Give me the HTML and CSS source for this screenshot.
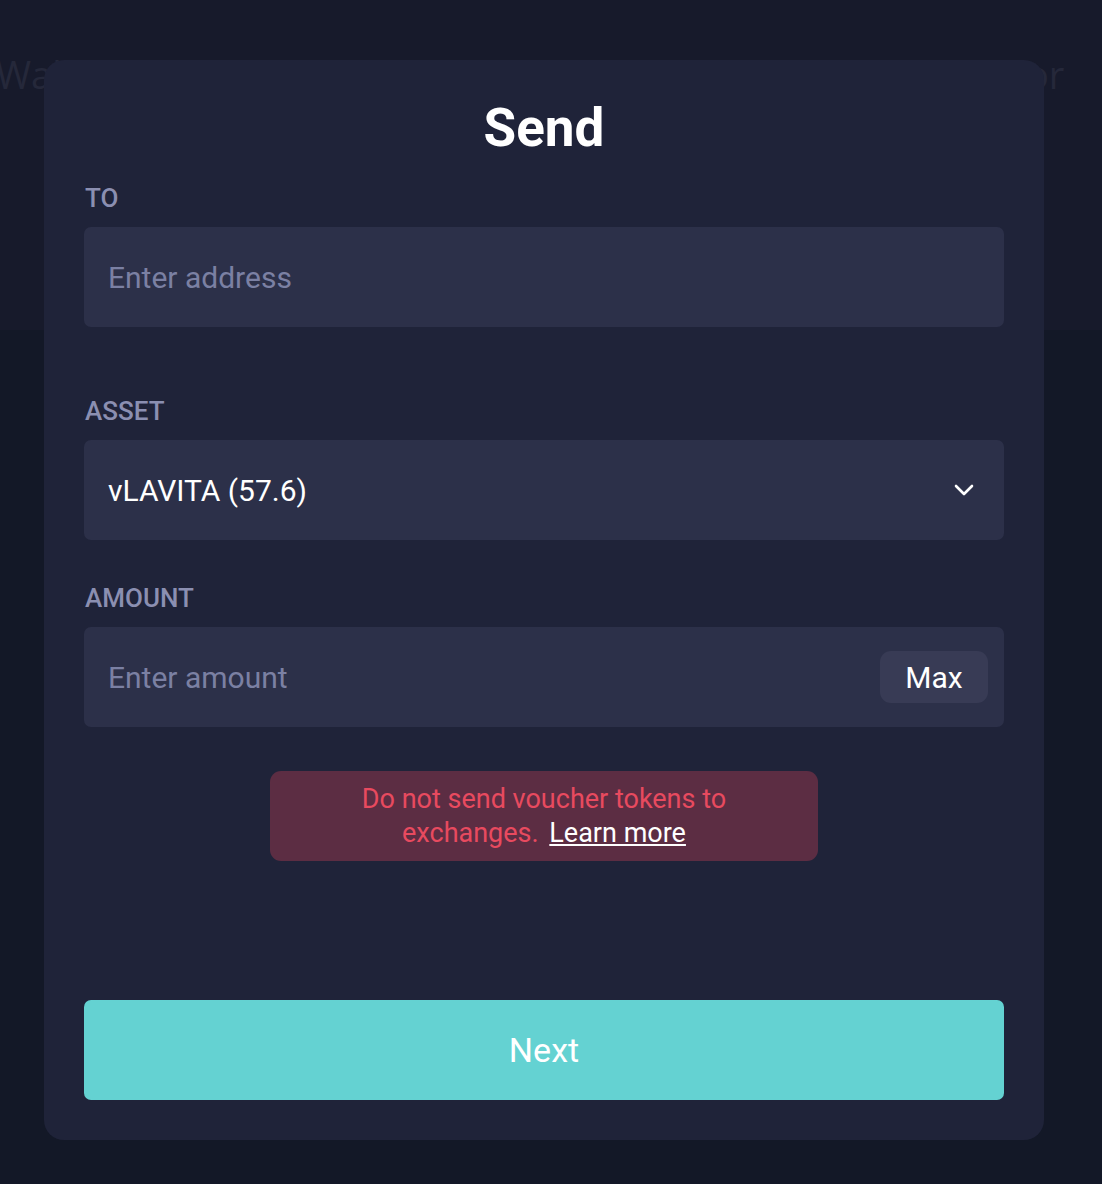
FILE: index.html
```html
<!DOCTYPE html>
<html lang="en">
<head>
	<meta charset="UTF-8">
	<title>Send</title>
	<link rel="stylesheet" href="styles.css">
</head>
<body>
	<header class="top">
		<nav class="nav">
			<span class="nav-item wallet">Wallet</span>
			<span class="nav-item">&#9665; Send</span>
			<span class="nav-item">&#9633;&#8630; Receive</span>
			<span class="nav-item">&#8635; Swap</span>
			<span class="nav-item">Stake</span>
			<span class="nav-item">For</span>
		</nav>
	</header>

	<div class="overlay">
		<section class="modal">
			<h1 class="modal-title">Send</h1>

			<div class="field field-to">
				<label class="field-label">TO</label>
				<div class="field-box">
					<input class="field-input" type="text" placeholder="Enter address">
				</div>
			</div>

			<div class="field">
				<label class="field-label">ASSET</label>
				<div class="field-box select">
					<span class="select-value">vLAVITA (57.6)</span>
					<svg class="chevron" width="20" height="12" viewBox="0 0 20 12">
						<path d="M2 2 L10 10 L18 2" fill="none" stroke="#fff" stroke-width="2.6" stroke-linecap="round" stroke-linejoin="round"/>
					</svg>
				</div>
			</div>

			<div class="field">
				<label class="field-label">AMOUNT</label>
				<div class="field-box">
					<input class="field-input" type="text" placeholder="Enter amount">
					<button class="max-btn" type="button">Max</button>
				</div>
			</div>

			<p class="warning">
				Do not send voucher tokens to exchanges. <a class="warning-link" href="#">Learn more</a>
			</p>

			<button class="next-btn" type="button">Next</button>
		</section>
	</div>
</body>
</html>
```

FILE: styles.css
```css
*{
	box-sizing:border-box;
	margin:0;
	padding:0;
}
body{
	background:#131827;
	font-family:Roboto, "Noto Sans", sans-serif;
	height:1184px;
	overflow:hidden;
}
.top{
	background:#171a2b;
	height:330px;
}
.nav{
	display:flex;
	gap:48px;
	padding:48px 0 0 0;
	margin-left:-4px;
	white-space:nowrap;
}
.nav-item{
	color:#25283a;
	font-size:38px;
	font-family:"Open Sans", sans-serif;
	line-height:52px;
}
.wallet{
	margin-right:100px;
}
.overlay{
	position:fixed;
	top:0;
	left:0;
	right:0;
	bottom:0;
	padding:60px 0 0 44px;
}
.modal{
	width:1000px;
	height:1080px;
	background:#1f2339;
	border-radius:20px;
	padding:36px 40px 40px;
	display:flex;
	flex-direction:column;
}
.modal-title{
	color:#fff;
	font-size:53px;
	font-weight:700;
	text-align:center;
	line-height:64px;
}
.field{
	display:flex;
	flex-direction:column;
	gap:13px;
	margin-top:42px;
}
.field-to{
	margin-top:22px;
	margin-bottom:26px;
}
.field-label{
	color:#8b8fb1;
	font-size:26px;
	font-weight:500;
	line-height:32px;
	padding-left:1px;
}
.field-box{
	display:flex;
	align-items:center;
	height:100px;
	background:#2c3049;
	border-radius:7px;
	padding:0 16px 0 24px;
}
.field-input{
	flex:1;
	background:none;
	border:none;
	outline:none;
	color:#fff;
	font-family:Roboto, "Noto Sans", sans-serif;
	font-size:30px;
}
.field-input::placeholder{
	color:#7b80a3;
}
.select{
	justify-content:space-between;
	padding-right:30px;
}
.select-value{
	color:#fff;
	font-size:30px;
}
.chevron{
	display:block;
}
.max-btn{
	width:108px;
	height:52px;
	border:none;
	border-radius:11px;
	background:#383b55;
	color:#fff;
	font-family:Roboto, "Noto Sans", sans-serif;
	font-size:30px;
}
.warning{
	align-self:center;
	width:548px;
	margin-top:44px;
	padding:11px 24px;
	background:#5c2d43;
	border-radius:11px;
	color:#e84a5f;
	font-size:27px;
	line-height:34px;
	text-align:center;
}
.warning-link{
	color:#fff;
	margin-left:4px;
}
.next-btn{
	margin-top:auto;
	height:100px;
	border:none;
	border-radius:7px;
	background:#64d2d2;
	color:#fff;
	font-family:Roboto, "Noto Sans", sans-serif;
	font-size:34px;
}
```
